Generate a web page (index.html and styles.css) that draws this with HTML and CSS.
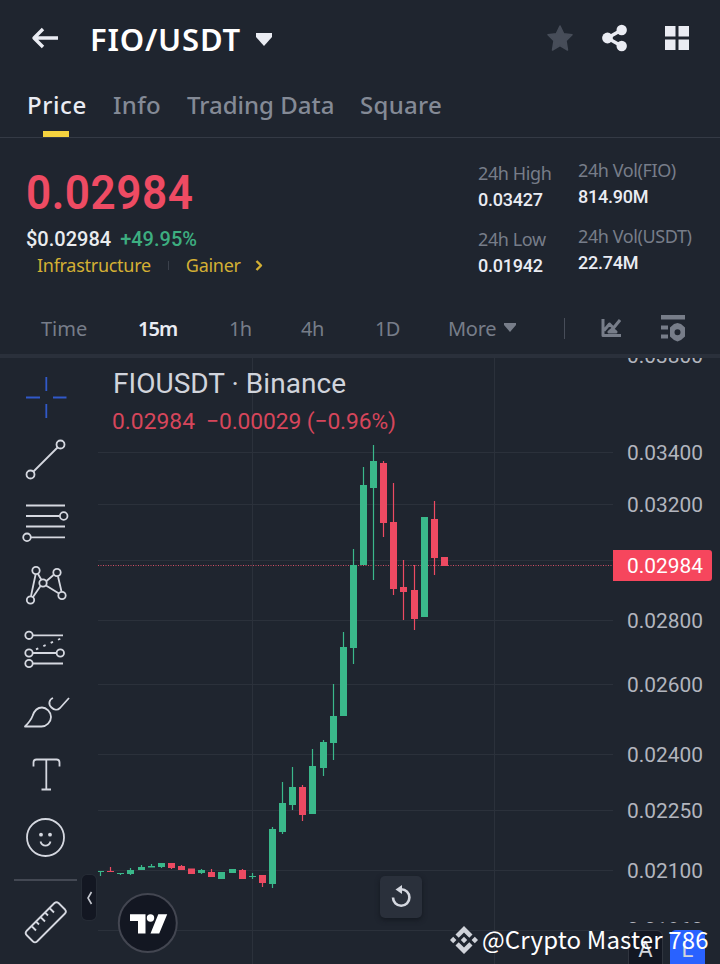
FILE: index.html
```html
<!DOCTYPE html>
<html lang="en">
<head>
<meta charset="utf-8">
<title>FIO/USDT</title>
<link rel="stylesheet" href="styles.css">
</head>
<body>
<header class="topbar">
  <svg class="back" width="28" height="24" viewBox="0 0 28 24"><path d="M27 12H3M12 3L3 12l9 9"/></svg>
  <h1>FIO/USDT</h1>
  <svg class="caret" width="16" height="13" viewBox="0 0 16 13"><path d="M0 0h16v4L8 13 0 4z"/></svg>
  <div class="actions">
    <svg width="28" height="28" viewBox="0 0 28 28"><path class="star" d="M14 2l3.700 7.700 8.300 1.100-6 5.900 1.500 9.300L14 21.600 6.500 26 8 16.700l-6-5.900 8.300-1.100z"/></svg>
    <svg width="28" height="28" viewBox="0 0 28 28"><path class="share-line" d="M20.500 6L6.500 14l14 8"/><g class="light"><circle cx="20.700" cy="6" r="5.200"/><circle cx="6.500" cy="14" r="5.400"/><circle cx="20.700" cy="22" r="5.200"/></g></svg>
    <svg width="24" height="24" viewBox="0 0 24 24"><path class="light" d="M0 0h10.500v10.500H0zM13.500 0H24v10.500H13.500zM0 13.500h10.500V24H0zM13.500 13.500H24V24H13.500z"/></svg>
  </div>
</header>
<nav class="tabs">
  <a class="tab active"><span class="t-price">Price</span></a>
  <a class="tab"><span class="t-info">Info</span></a>
  <a class="tab"><span class="t-data">Trading Data</span></a>
  <a class="tab"><span class="t-square">Square</span></a>
</nav>
<section class="summary">
  <div class="quote">
    <div class="price"><span>0.02984</span></div>
    <div class="sub"><span class="usd">$0.02984</span><span class="gain">+49.95%</span></div>
    <div class="tags"><span>Infrastructure</span><i></i><span>Gainer</span>
      <svg width="8" height="11" viewBox="0 0 8 11"><path d="M1.500 1l4.500 4.500L1.500 10"/></svg></div>
  </div>
  <dl class="stats stats-a">
    <dt>24h High</dt><dd>0.03427</dd>
    <dt>24h Low</dt><dd>0.01942</dd>
  </dl>
  <dl class="stats stats-b">
    <dt>24h Vol(FIO)</dt><dd>814.90M</dd>
    <dt>24h Vol(USDT)</dt><dd>22.74M</dd>
  </dl>
</section>
<nav class="frames">
  <span class="f1">Time</span><span class="f2">15m</span><span class="f3">1h</span><span class="f4">4h</span><span class="f5">1D</span>
  <span class="f6">More</span><svg class="more" width="12" height="9" viewBox="0 0 12 9"><path d="M0 0h12v2L6 9 0 2z"/></svg>
  <i></i>
  <svg class="ind" width="20" height="22" viewBox="0 0 20 22"><path d="M2 2v16.500h18M3 13.500L8.500 7l4 4L19 3M8 15h7l-3.500-3z"/></svg>
  <svg class="cfg" width="26" height="26" viewBox="0 0 26 26"><path d="M1 0h24v4.500H1zM1 10.500h7v4H1zM1 19.500h7v4H1z"/><path fill-rule="evenodd" d="M14 9l3.500-1 3.500 1 4 3.500v9L21 25l-3.500 1.500L14 25l-4-3.500v-9zM17.500 14.200a3 3 0 1 0 0 6 3 3 0 0 0 0-6z"/></svg>
</nav>
<main class="chart">
  <aside class="tools">
    <svg class="cross" viewBox="0 0 60 60"><path d="M11 29.500h14M38 29.500h13.500M31.300 9v14M31.300 36v14"/></svg>
    <svg viewBox="0 1 60 60"><path d="M18.500 41.500l24-24"/><circle cx="45.500" cy="14.500" r="4"/><circle cx="15.500" cy="44.500" r="4"/></svg>
    <svg viewBox="0 1 60 60"><path d="M11 12.500h39M11 23h33.500M11 33.500h39M16 44.300h34"/><circle cx="48.700" cy="23" r="3.800"/><circle cx="12" cy="44.300" r="3.800"/></svg>
    <svg viewBox="0 0 60 60"><path d="M20.600 18.500L16 40M23 18l3.500 6M31.500 25L38.500 19M43 20.500l3.500 15M31 29.500l13 8M25.500 30L18 41"/><circle cx="21" cy="14.500" r="3.700"/><circle cx="42" cy="16.500" r="3.700"/><circle cx="28" cy="27" r="3.700"/><circle cx="47" cy="39.500" r="3.700"/><circle cx="15.500" cy="44" r="3.700"/></svg>
    <svg viewBox="0 -1 60 60"><path d="M18 15.300h30M18 33h23M18 43.500h30"/><path stroke-dasharray="2.500 5.500" d="M21 29.300L47 18"/><circle cx="14" cy="15.300" r="3.700"/><circle cx="14" cy="33" r="3.700"/><circle cx="45.300" cy="33" r="3.700"/><circle cx="14" cy="43.500" r="3.700"/></svg>
    <svg viewBox="0.500 -1 60 60"><path d="M10.500 43.500H27c5 0 9.500-4.500 9.500-9.500S32 24.500 27.500 24.500c-6 0-8 4-9.500 8.500-1.500 4-4.500 7.500-7.500 10.500zM38.500 15c-4 1.500-5 6.500-1.500 9.500 2.500 2.500 6 3 8.500 .5L54.500 15"/></svg>
    <svg viewBox="0 0 60 60"><path d="M18.500 21.500v-4q0-3 3-3h20q3 0 3 3v4M31.300 14.500v30M26.500 44.500H36"/></svg>
    <svg viewBox="0 0 60 60"><circle cx="30.500" cy="29.500" r="18.500"/><path d="M25.500 33.500c1.500 5.500 8.500 5.500 10 0"/><g class="dot"><circle cx="26" cy="26.700" r="1.900"/><circle cx="35" cy="26.700" r="1.900"/></g></svg>
    <hr>
    <svg viewBox="0 0 60 60"><path d="M39.500 11q2-1.600 4 0l6.500 6.500q1.800 2 0 4L22 49.500q-2 1.700-4 0L11.500 43q-1.700-2 0-4zM34.500 16l4.500 4.500M30 20.500l3 3M25.500 25l4.500 4.500M21 29.500l3 3M16.500 34l4.500 4.500"/></svg>
  </aside>
  <svg class="plot" width="622" height="606" viewBox="98 358 622 606">
    <path class="grid" d="M98 452.500h515M98 504.500h515M98 560.500h515M98 620.500h515M98 684.500h515M98 754.500h515M98 810.500h515M98 870.500h515M98 930.500h515M252.500 358v606M494.500 358v606"/>
    <path class="last" d="M98 565.500h515"/>
    <g class="up">
      <path class="wick" d="M100.500 871v5M120.500 873v2M130.500 868v7M141.500 865v5M151.500 864v3M161.500 863v5M201.500 869v5M252.500 873v6M272.500 827v61M282.500 782v52M292.500 767v43M312.500 749v65M323.500 740v36M333.500 684v76M343.500 632v84M353.500 549v115M363.500 467v98M373.500 445v135"/>
      <path d="M97 871h7v1h-7zM117 873h7v1h-7zM127 870h7v4h-7zM138 867h7v3h-7zM148 866h7v1.500h-7zM158 863h7v4h-7zM198 870h7v3h-7zM218 872h7v7h-7zM229 869h7v4h-7zM249 876h7v1h-7zM269 829h7v55h-7zM279 803h7v29h-7zM289 787h7v18h-7zM309 766h7v48h-7zM320 742h7v26h-7zM330 716h7v27h-7zM340 647h7v69h-7zM350 565h7v83h-7zM360 485h7v80h-7zM370 461h7v27h-7zM421 517h7v100h-7z"/>
    </g>
    <g class="down">
      <path class="wick" d="M110.500 867v5M171.500 863v6M181.500 865v5M211.500 869v8M242.500 869v10M262.500 875v12M302.500 785v36M383.500 461v76M393.500 483v112M403.500 560v60M414.500 565v65M434.500 501v74"/>
      <path d="M107 871h7v1h-7zM168 863h7v5h-7zM178 866h7v4h-7zM188 868.500h7v5.500h-7zM208 872h7v5h-7zM239 870h7v9h-7zM259 875h7v8h-7zM299 787h7v28h-7zM380 463h7v60h-7zM390 522h7v67h-7zM400 587h7v5h-7zM411 590h7v29h-7zM431 519h7v39h-7zM441 557h7v9h-7z"/>
    </g>
    <text class="symbol" x="113" y="393" textLength="233">FIOUSDT · Binance</text>
    <g class="change"><text x="112" y="429" textLength="83">0.02984</text><text x="206" y="429" textLength="190">−0.00029 (−0.96%)</text></g>
    <g class="axis">
      <text x="627" y="363">0.03800</text><text x="627" y="460">0.03400</text><text x="627" y="512">0.03200</text><text x="627" y="628">0.02800</text><text x="627" y="692">0.02600</text><text x="627" y="762">0.02400</text><text x="627" y="818">0.02250</text><text x="627" y="878">0.02100</text>
      <text x="627" y="937">0.01960</text>
    </g>
    <rect class="base" x="620" y="923" width="100" height="41"/>
    <path class="tag" d="M613 550h96q3 0 3 3v25q0 3-3 3h-96z"/>
    <text class="tag-text" x="627" y="573" textLength="76">0.02984</text>
    <g class="logo"><circle cx="147.800" cy="923" r="29"/><path d="M130 914.300h15.500v19.200H138v-12.500h-8zM158.300 914.300h8.900l-8 19.200h-8.700z"/><circle class="logo-dot" cx="150.500" cy="918" r="3.700"/></g>
  </svg>
  <button class="collapse"><svg width="7" height="14" viewBox="0 0 7 14"><path d="M5.500 1L2 7l3.500 6"/></svg></button>
  <button class="reset"><svg width="22" height="24" viewBox="0 0 22 24"><path class="arc" d="M3 12.500a8.200 8.200 0 1 0 8.200-8.200H9"/><path class="head" d="M5.500 4.500L12 0v9z"/></svg></button>
  <div class="modes"><span>A</span><span class="on">L</span></div>
  <div class="credit">
    <svg width="28" height="28" viewBox="0 0 28 28"><path d="M14 0l8.500 8.500-3.200 3.200L14 6.400l-5.300 5.300-3.200-3.200zM14 28l8.500-8.500-3.200-3.200-5.300 5.300-5.300-5.300-3.200 3.200zM3.200 10.800L6.400 14l-3.200 3.200L0 14zM24.800 10.800L28 14l-3.200 3.200-3.200-3.200zM14 10.800l3.200 3.200-3.200 3.200-3.200-3.200z"/></svg>
    <span>@Crypto Master 786</span>
  </div>
</main>
</body>
</html>
```
FILE: styles.css
```css
* { box-sizing: border-box; }
body {
  margin: 0;
  width: 720px;
  height: 964px;
  overflow: hidden;
  background: #1f252f;
  color: #eaecef;
  font-family: "Noto Sans", sans-serif;
}
svg { display: block; flex: none; }
path, circle { stroke-linejoin: round; }

.topbar { height: 78px; display: flex; align-items: center; padding: 0 31px 2px 31px; }
.back { fill: none; stroke: #eaecf3; stroke-width: 3.400; }
h1 { margin: 2px 0 0 31px; width: 166px; font-size: 31px; line-height: 40px; font-weight: 600; letter-spacing: 0.800px; color: #fff; }
.caret { fill: #eaecf3; margin-top: 2px; }
.actions { margin-left: auto; display: flex; align-items: center; gap: 28px; }
.actions svg:first-child { margin-right: -1px; }
.actions svg:last-child { margin-left: 8px; }
.star { fill: #474d59; stroke: #474d59; stroke-width: 1.500; }
.light { fill: #eaecf3; }
.share-line { fill: none; stroke: #eaecf3; stroke-width: 3.500; }

.tabs { height: 60px; display: flex; gap: 27px; padding-left: 27px; border-bottom: 1px solid #343a45; }
.tab { position: relative; line-height: 54px; font-size: 24px; font-weight: 500; color: #848a96; white-space: nowrap; }
.tab span { display: inline-block; }
.tab.active { color: #eaecf3; }
.tab.active::after { content: ""; position: absolute; left: 16px; bottom: 0; width: 26px; height: 6px; background: #f5d33f; }
.t-price { width: 59px; letter-spacing: 0.600px; }
.t-info { width: 47px; letter-spacing: 0.300px; }
.t-data { width: 146px; }
.t-square { width: 82px; letter-spacing: 0.300px; }

.summary { height: 162px; display: flex; padding-left: 27px; }
.quote { width: 451px; padding-top: 29px; }
.price { height: 52px; font: 600 49px/52px Roboto, sans-serif; color: #ee4b63; }
.price span { display: inline-block; margin-left: -1px; transform: scaleX(0.900); transform-origin: 0 50%; letter-spacing: 0.600px; }
.sub { height: 28px; margin: 6px 0 0 -1px; display: flex; gap: 9px; font: 500 20px/28px Roboto, sans-serif; }
.gain { color: #3dae80; }
.tags { display: flex; align-items: center; height: 26px; margin-top: -1px; padding-left: 10px; font-size: 18px; letter-spacing: -0.280px; color: #d4b034; white-space: nowrap; }
.tags i { width: 1px; height: 9px; margin: 0 17px; background: #3b414c; }
.tags svg { margin-left: 14px; fill: none; stroke: #d4b034; stroke-width: 2.400; }
.stats { margin: 0; font-size: 18px; letter-spacing: -0.400px; white-space: nowrap; }
.stats-a { width: 100px; padding-top: 22px; }
.stats-b { padding-top: 19px; }
.stats dt { height: 27px; line-height: 27px; color: #777d89; }
.stats dd { margin: 0 0 13px; height: 26px; font: 500 18px/26px Roboto, sans-serif; letter-spacing: -0.250px; color: #eaecf3; }

.frames { height: 54px; display: flex; align-items: center; padding: 4px 0 0 41px; font: 20px/28px "Noto Sans", sans-serif; color: #777d89; white-space: nowrap; }
.f1 { width: 97px; }
.f2 { width: 91px; font-weight: 600; letter-spacing: -0.900px; color: #eaecf3; }
.f3 { width: 72px; letter-spacing: -0.800px; }
.f4 { width: 74px; letter-spacing: -0.500px; }
.f5 { width: 73px; letter-spacing: -0.800px; }
.f6 { width: 56px; letter-spacing: -0.300px; }
.more { fill: #777d89; margin-top: -3px; }
.frames i { width: 1px; height: 21px; margin: -2px 36px 0 48px; background: #474d59; }
.ind { fill: none; stroke: #777d89; stroke-width: 3; margin-top: -2px; }
.cfg { margin: -2px 0 0 39px; fill: #777d89; overflow: visible; }

.chart { position: relative; height: 610px; border-top: 4px solid #2a303b; display: flex; }
.tools { width: 98px; padding: 10px 0 0 15px; }
.tools svg { width: 60px; height: 60px; margin-bottom: 2.800px; fill: none; stroke: #d5d8e0; stroke-width: 1.800; }
.tools .cross { stroke: #3159c9; }
.tools .dot { fill: #d5d8e0; stroke: none; }
.tools hr { width: 63px; height: 2px; margin: 11px 0 11px -1px; border: 0; background: #434853; }
.grid { stroke: #2b313b; fill: none; }
.last { stroke: #cf4f64; stroke-dasharray: 1 1.500; }
.up { fill: #3ab88a; stroke: none; }
.down { fill: #ed4a62; }
.wick { fill: none; stroke-width: 1.200; }
.up .wick { stroke: #3ab88a; }
.down .wick { stroke: #ed4a62; }
.plot { font-family: Roboto, sans-serif; }
.symbol { font-size: 28px; fill: #d1d4dc; }
.change { font-size: 22.800px; fill: #d6465b; }
.axis { font-size: 20.900px; fill: #b2b5be; }
.base { fill: #1f252f; }
.tag { fill: #f6465d; }
.tag-text { font-size: 20.900px; fill: #fff; }
.logo circle { fill: #131722; stroke: #434651; stroke-width: 2; }
.logo path, .logo .logo-dot { fill: #fff; stroke: none; }
button { padding: 0; border: 0; display: grid; place-items: center; }
.collapse { position: absolute; left: 82px; top: 517px; width: 14px; height: 45px; border-radius: 5px; background: #131722; box-shadow: 0 0 0 1px #252b35; }
.collapse path { fill: none; stroke: #c5c8d0; stroke-width: 1.600; }
.reset { position: absolute; left: 380px; top: 518px; width: 42px; height: 42px; border-radius: 5px; background: #2a303b; box-shadow: 0 2px 5px #141920; }
.arc { fill: none; stroke: #d5d8e0; stroke-width: 2.600; }
.head { fill: #d5d8e0; }
.modes { position: absolute; left: 628px; top: 572px; display: flex; gap: 7px; }
.modes span { width: 35px; height: 40px; border-radius: 6px 6px 0 0; border: 1px solid #30353f; background: #131722; text-align: center; font: 22px/38px Roboto, sans-serif; color: #d1d4dc; }
.modes .on { border-color: #2962ff; background: #2962ff; }
.credit { position: absolute; left: 450px; top: 565px; display: flex; align-items: center; gap: 4px; height: 34px; font: 400 24px/34px "Noto Sans CJK SC", sans-serif; color: #fff; white-space: nowrap; }
.credit span { margin-top: -2px; letter-spacing: 0.150px; }
.credit path { fill: #d0d3da; }
```
